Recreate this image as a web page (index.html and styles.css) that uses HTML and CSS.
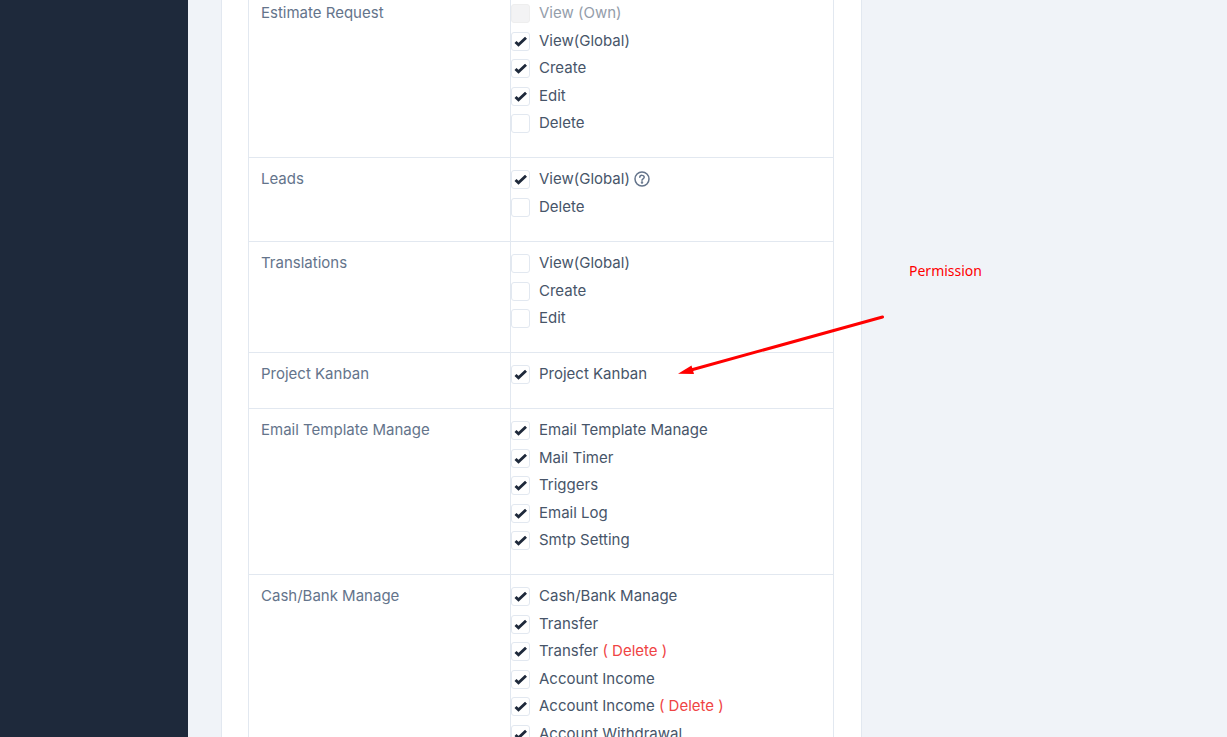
FILE: index.html
```
<!DOCTYPE html>
<html lang="en">
<head>
    <meta charset="UTF-8">
    <meta name="viewport" content="width=device-width, initial-scale=1.0">
    <title>Role Permissions</title>
    <link rel="stylesheet" href="styles.css">
</head>
<body>
    <aside class="sidebar"></aside>
    <main class="content">
        <div class="panel">
            <table class="roles">
                <tbody id="roles"></tbody>
            </table>
        </div>
        <svg class="arrow" width="206" height="62" viewBox="0 0 206 62">
            <path d="M203.500 3 L12 56" stroke="#ff0000" stroke-width="3" stroke-linecap="round" fill="none"/>
            <path d="M-1 59.800 L12.500 51.500 L15 60 Z" fill="#ff0000"/>
        </svg>
        <p class="note">Permission</p>
    </main>
    <script src="script.js"></script>
</body>
</html>
```
FILE: styles.css
```
* {
    box-sizing: border-box;
}
body {
    margin: 0;
    display: flex;
    height: 100vh;
    overflow: hidden;
    background: #f0f3f8;
    font-family: Inter, "Liberation Sans", sans-serif;
    font-size: 15px;
    line-height: 22px;
    color: #475569;
}
.sidebar {
    flex: 0 0 188px;
    background: #1e293b;
}
.content {
    flex: 1;
    position: relative;
    display: grid;
    grid-template-columns: 2fr 1fr;
    padding: 0 44px 0 33px;
}
.panel {
    background: #fff;
    border: 1px solid #e2e8f0;
    border-width: 0 1px;
    padding: 0 27px 0 26px;
}
.roles {
    width: 100%;
    table-layout: fixed;
    border-collapse: collapse;
}
.roles th,
.roles td {
    border: 1px solid #e2e8f0;
    vertical-align: top;
    padding: 10px 0 17px;
}
.roles th {
    width: 262px;
    padding-left: 12px;
    text-align: left;
    font-weight: 400;
    color: #64748b;
}
.roles tr:first-child th,
.roles tr:first-child td {
    border-top: 0;
    padding-top: 2px;
}
.check {
    display: flex;
    align-items: center;
    height: 22px;
    margin-bottom: 6px;
}
.check:nth-child(even):not(:last-child) {
    margin-bottom: 5px;
}
.check input {
    appearance: none;
    flex: none;
    width: 19px;
    height: 19px;
    margin: 0 9px 0 0;
    border: 1px solid #e2e8f0;
    border-radius: 3px;
    background: #fff;
}
.check input:checked {
    background: #fff url("data:image/svg+xml,%3Csvg xmlns='http://www.w3.org/2000/svg' viewBox='0 0 17 17'%3E%3Cpath d='M3.500 9 L6.500 11.800 L14 4.800' fill='none' stroke='%231e293b' stroke-width='2.900'/%3E%3C/svg%3E") center / 17px 17px no-repeat;
}
.check input:disabled {
    background: #f3f3f4;
    border-color: #eeeeee;
}
.check input:disabled + label {
    color: #949daa;
}
.danger {
    color: #ef4444;
}
.help {
    margin-left: 4px;
    color: #64748b;
}
.arrow {
    position: absolute;
    left: 491px;
    top: 314px;
    overflow: visible;
}
.note {
    position: absolute;
    left: 721px;
    top: 260px;
    margin: 0;
    font-family: "Noto Sans", sans-serif;
    font-size: 14px;
    color: #ff0000;
}
```
FILE: script.js
```
const roles = [
    ["Estimate Request", [["View (Own)", "disabled"], ["View(Global)", "checked"], ["Create", "checked"], ["Edit", "checked"], ["Delete", ""]]],
    ["Leads", [["View(Global)", "checked", "help"], ["Delete", ""]]],
    ["Translations", [["View(Global)", ""], ["Create", ""], ["Edit", ""]]],
    ["Project Kanban", [["Project Kanban", "checked"]]],
    ["Email Template Manage", [["Email Template Manage", "checked"], ["Mail Timer", "checked"], ["Triggers", "checked"], ["Email Log", "checked"], ["Smtp Setting", "checked"]]],
    ["Cash/Bank Manage", [["Cash/Bank Manage", "checked"], ["Transfer", "checked"], ["Transfer", "checked", "delete"], ["Account Income", "checked"], ["Account Income", "checked", "delete"], ["Account Withdrawal", "checked"]]]
]

const helpIcon = `<svg class="help" width="16" height="16" viewBox="0 0 16 16" fill="none" stroke="currentColor" stroke-width="1.5" stroke-linecap="round">
    <circle cx="8" cy="8" r="7"/>
    <path d="M5.800 6.200 C5.900 3.700 10.200 3.800 10.200 6.300 C10.200 7.800 8 7.800 8 9.200"/>
    <circle cx="8" cy="11.500" r="0.500"/>
</svg>`

document.querySelector("#roles").innerHTML = roles.map(([name, items], r) => `
    <tr>
        <th scope="row">${name}</th>
        <td>${items.map(([text, state, extra], i) => `
            <div class="check">
                <input type="checkbox" id="p${r}-${i}" ${state}>
                <label for="p${r}-${i}">${text}${extra == "delete" ? ` <span class="danger">( Delete )</span>` : ""}</label>
                ${extra == "help" ? helpIcon : ""}
            </div>`).join("")}
        </td>
    </tr>`).join("")
```
